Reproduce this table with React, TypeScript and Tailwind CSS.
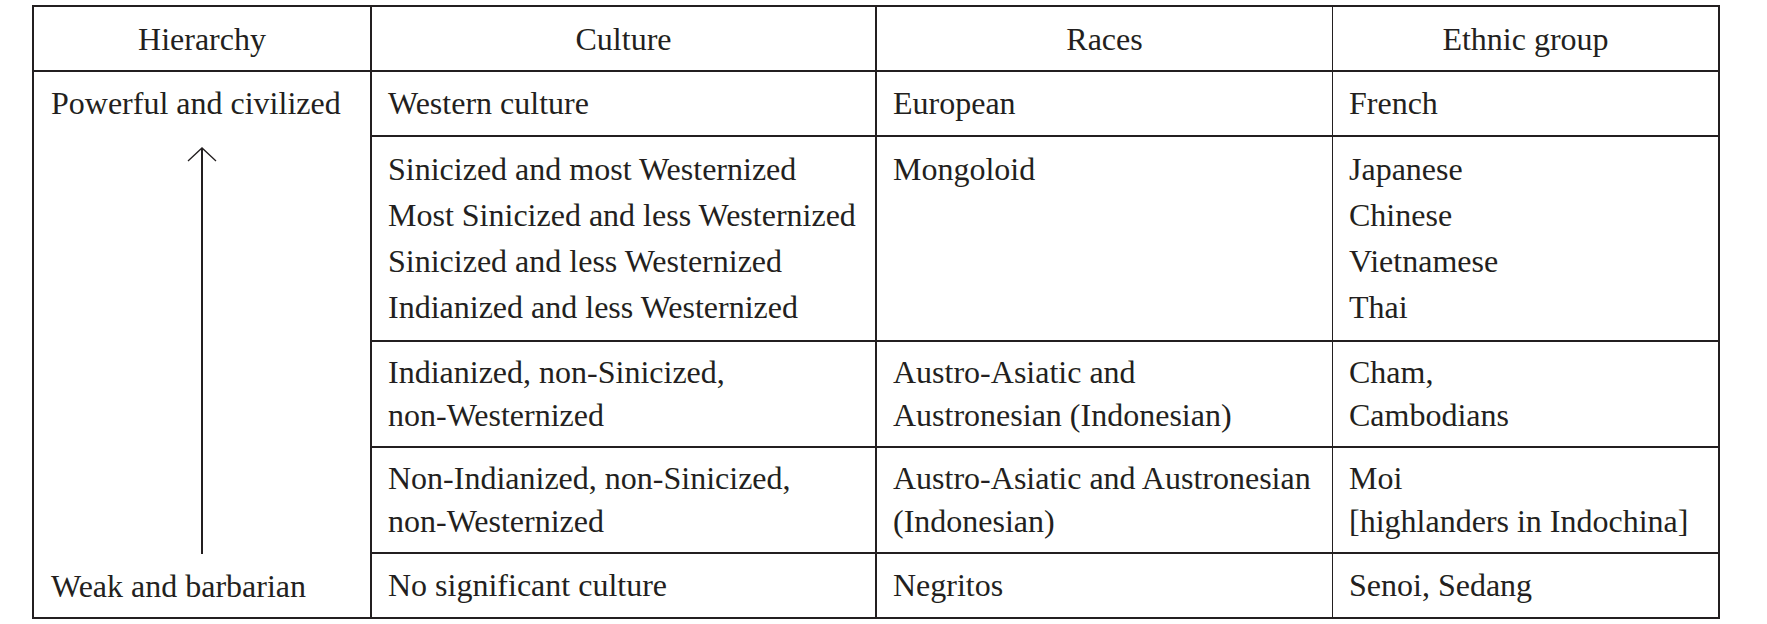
type Row = {
  culture: string[];
  races: string[];
  ethnic: string[];
  lead?: string;
};

const ROWS: Row[] = [
  { culture: ['Western culture'], races: ['European'], ethnic: ['French'] },
  {
    culture: [
      'Sinicized and most Westernized',
      'Most Sinicized and less Westernized',
      'Sinicized and less Westernized',
      'Indianized and less Westernized',
    ],
    races: ['Mongoloid'],
    ethnic: ['Japanese', 'Chinese', 'Vietnamese', 'Thai'],
    lead: 'leading-[46px]',
  },
  {
    culture: ['Indianized, non-Sinicized,', 'non-Westernized'],
    races: ['Austro-Asiatic and', 'Austronesian (Indonesian)'],
    ethnic: ['Cham,', 'Cambodians'],
    lead: 'leading-[43px]',
  },
  {
    culture: ['Non-Indianized, non-Sinicized,', 'non-Westernized'],
    races: ['Austro-Asiatic and Austronesian', '(Indonesian)'],
    ethnic: ['Moi', '[highlanders in Indochina]'],
    lead: 'leading-[43px]',
  },
  { culture: ['No significant culture'], races: ['Negritos'], ethnic: ['Senoi, Sedang'] },
];

function Lines({ lines, lead }: { lines: string[]; lead?: string }) {
  return (
    <div className={`whitespace-nowrap pl-[16px] pt-[9px] ${lead ?? 'leading-[44px]'}`}>
      {lines.map((l) => (
        <div key={l}>{l}</div>
      ))}
    </div>
  );
}

/** 상승 화살표 — 얇은 열린 촉. */
function UpArrow() {
  return (
    <svg className="h-full w-[40px]" viewBox="0 0 40 417" preserveAspectRatio="none" fill="none" stroke="#231f20" strokeLinecap="butt">
      <line x1="20" y1="11" x2="20" y2="417" strokeWidth={2} />
      <polyline points="6 24 20 11 34 24" strokeWidth={1.3} />
    </svg>
  );
}

export default function App() {
  return (
    <div className="min-h-screen bg-white pl-[32px] pt-[5px] font-['Liberation_Serif','Times_New_Roman',serif] text-[32px] text-[#231f20]">
      <div className="grid w-[1688px] grid-cols-[338px_505px_456px_387px] grid-rows-[65px_65px_205px_106px_106px_65px] border-l-2 border-t-2 border-[#231f20]">
        {/* 헤더 */}
        {['Hierarchy', 'Culture', 'Races', 'Ethnic group'].map((h, i) => (
          <div
            key={h}
            className={`flex items-center justify-center border-b-2 border-[#231f20] leading-[44px] ${
              i === 2 ? 'border-r' : 'border-r-2'
            }`}
          >
            {h}
          </div>
        ))}

        {/* 위계 열 — 다섯 행에 걸침 */}
        <div className="col-start-1 row-span-5 row-start-2 flex flex-col border-b-2 border-r-2 border-[#231f20]">
          <div className="h-[65px] shrink-0 whitespace-nowrap pl-[17px] pt-[9px] leading-[44px]">Powerful and civilized</div>
          <div className="flex min-h-0 flex-1 justify-center">
            <UpArrow />
          </div>
          <div className="h-[63px] shrink-0 whitespace-nowrap pl-[17px] pt-[10px] leading-[44px]">Weak and barbarian</div>
        </div>

        {ROWS.map((r, i) => (
          <div key={i} className="contents">
            <div className="border-b-2 border-r-2 border-[#231f20]">
              <Lines lines={r.culture} lead={r.lead} />
            </div>
            <div className="border-b-2 border-r border-[#231f20]">
              <Lines lines={r.races} lead={r.lead} />
            </div>
            <div className="border-b-2 border-r-2 border-[#231f20]">
              <Lines lines={r.ethnic} lead={r.lead} />
            </div>
          </div>
        ))}
      </div>
    </div>
  );
}
